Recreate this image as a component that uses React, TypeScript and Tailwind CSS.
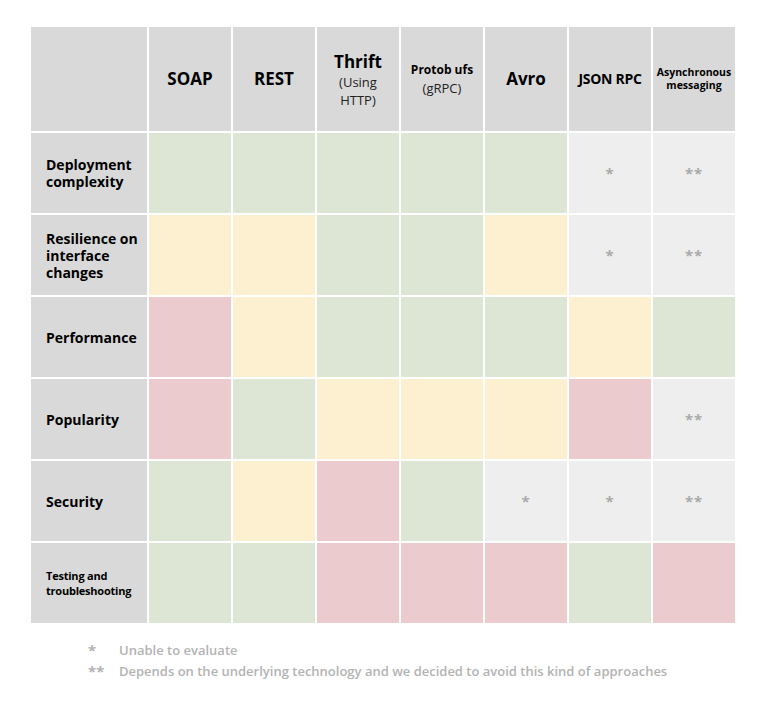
const G = 'bg-[#dde6d5]'
const Y = 'bg-[#fcf0d1]'
const R = 'bg-[#ebcbcd]'
const L = 'bg-[#eeeeee]'

type Cell = { c: string; mark?: string }

const ROWS: { label: string; small?: boolean; cells: Cell[] }[] = [
  {
    label: 'Deployment complexity',
    cells: [{ c: G }, { c: G }, { c: G }, { c: G }, { c: G }, { c: L, mark: '*' }, { c: L, mark: '**' }],
  },
  {
    label: 'Resilience on interface changes',
    cells: [{ c: Y }, { c: Y }, { c: G }, { c: G }, { c: Y }, { c: L, mark: '*' }, { c: L, mark: '**' }],
  },
  {
    label: 'Performance',
    cells: [{ c: R }, { c: Y }, { c: G }, { c: G }, { c: G }, { c: Y }, { c: G }],
  },
  {
    label: 'Popularity',
    cells: [{ c: R }, { c: G }, { c: Y }, { c: Y }, { c: Y }, { c: R }, { c: L, mark: '**' }],
  },
  {
    label: 'Security',
    cells: [{ c: G }, { c: Y }, { c: R }, { c: G }, { c: L, mark: '*' }, { c: L, mark: '*' }, { c: L, mark: '**' }],
  },
  {
    label: 'Testing and troubleshooting',
    small: true,
    cells: [{ c: G }, { c: G }, { c: R }, { c: R }, { c: R }, { c: G }, { c: R }],
  },
]

const HEAD = 'bg-[#d9d9d9] flex flex-col items-center justify-center text-center text-black'

export default function App() {
  return (
    <div className="w-[759px] h-[704px] bg-white font-['Open_Sans',sans-serif]">
      <div className="pt-[27px] pl-[31px]">
        <div className="grid grid-cols-[116px_repeat(7,82px)] grid-rows-[104px_repeat(6,80px)] gap-[2px] w-fit">
          <div className="bg-[#d9d9d9]" />
          <div className={HEAD}>
            <span className="text-[17px] font-bold leading-[22px]">SOAP</span>
          </div>
          <div className={HEAD}>
            <span className="text-[17px] font-bold leading-[22px]">REST</span>
          </div>
          <div className={HEAD}>
            <span className="text-[17px] font-bold leading-[23px]">Thrift</span>
            <span className="text-[13px] leading-[18px] text-[#222]">(Using</span>
            <span className="text-[13px] leading-[18px] text-[#222]">HTTP)</span>
          </div>
          <div className={HEAD}>
            <span className="text-[12px] font-bold leading-[18px]">Protob ufs</span>
            <span className="text-[13px] leading-[18px] text-[#222]">(gRPC)</span>
          </div>
          <div className={HEAD}>
            <span className="text-[17px] font-bold leading-[22px]">Avro</span>
          </div>
          <div className={HEAD}>
            <span className="text-[14px] font-bold leading-[18px] tracking-[-0.02em]">JSON RPC</span>
          </div>
          <div className={HEAD}>
            <span className="text-[10.5px] font-bold leading-[13px]">Asynchronous</span>
            <span className="text-[10.5px] font-bold leading-[13px]">messaging</span>
          </div>

          {ROWS.map((row) => (
            <Row key={row.label} {...row} />
          ))}
        </div>

        <div className="mt-[17px] pl-[57px] text-[13px] font-semibold text-[#b3b3b3] leading-[21px]">
          <div className="flex">
            <span className="w-[31px] text-[15px] font-bold">*</span>
            <span>Unable to evaluate</span>
          </div>
          <div className="flex">
            <span className="w-[31px] text-[15px] font-bold">**</span>
            <span>Depends on the underlying technology and we decided to avoid this kind of approaches</span>
          </div>
        </div>
      </div>
    </div>
  )
}

function Row({ label, small, cells }: { label: string; small?: boolean; cells: Cell[] }) {
  return (
    <>
      <div className="bg-[#d9d9d9] flex items-center pl-[15px] pr-2">
        <span
          className={
            small
              ? 'text-[11px] font-bold leading-[15px] text-black tracking-[-0.02em]'
              : 'text-[14px] font-bold leading-[17px] text-black'
          }
        >
          {label}
        </span>
      </div>
      {cells.map((cell, i) => (
        <div key={i} className={`${cell.c} flex items-center justify-center`}>
          {cell.mark && <span className="text-[15px] font-bold text-[#aaaaaa] tracking-[0.05em]">{cell.mark}</span>}
        </div>
      ))}
    </>
  )
}
